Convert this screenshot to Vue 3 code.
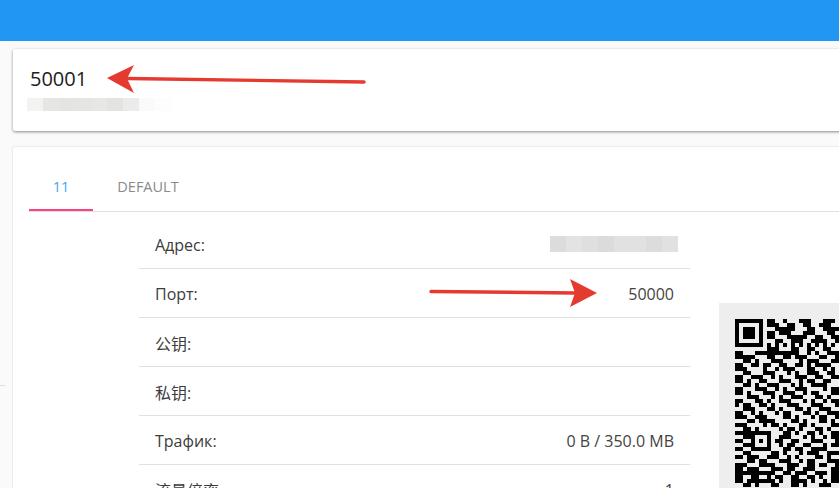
<script setup>
const rows = [
  { label: 'Адрес:', blur: true },
  { label: 'Порт:', value: '50000' },
  { label: '公钥:' },
  { label: '私钥:' },
  { label: 'Трафик:', value: '0 B / 350.0 MB' },
  { label: '流量倍率:', value: '1' }
]
const subtitleCells = ['#f3f3f2', '#e6e6e5', '#e4e4e3', '#e5e5e4', '#e7e7e6', '#e3e3e2', '#ebebea', '#fafafa', '#fdfdfd']
const valueCells = ['#dcdcdc', '#e3e3e3', '#dfdfdf', '#dbdbdb', '#e1e1e1', '#e1e1e1', '#dcdcdc', '#e1e1e1']
const qr = [
  '11111110110010001110001110',
  '10000010111001100110011100',
  '10111010001111100011001111',
  '10111010110111000111000110',
  '10111010110001111100110011',
  '10000010001100111001111001',
  '11111110101010101010101010',
  '00000000111000110011001100',
  '11000111111111110010100111',
  '11111000110011011100011001',
  '00110100011100001011100011',
  '11001101100110011010111100',
  '11100001001011100011001010',
  '00110001110001010011100110',
  '11001110010100011100110011',
  '11010011000111001011001100',
  '00110100111000101001111000',
  '11000111001010011100001011',
  '11010001110011100101100011',
  '00011100010100111000110100',
  '11000110100111000101001011',
  '10110011010001110001110001',
  '00111000110100011010011100',
  '11001010001011000110100111',
  '11100111000011010001011001',
  '00011011110000110100011010',
  '11100001011010001101000011',
  '00110100000101101000110100',
  '11111111100011010011010011',
  '00111000100111000101001011',
  '11001010101100110001110001',
  '00111000100101100110001011',
  '11001111100011011001111000',
  '00110000011010001011100111',
  '11011100111001010000110100',
  '00011011000111001011000111',
  '11100011110001110011011001',
  '11011100011101100111000011',
  '11111111110011011100111011',
  '11001100101100110011010011',
  '11011111110100111101001011',
  '00110100011000110100011100'
]
const qrPath = qr
  .map((line, y) =>
    [...line].map((c, x) => (c === '1' ? `M${x} ${y}h1v1h-1z` : '')).join('')
  )
  .join('')
</script>

<template>
  <div class="page">
    <header class="bar"></header>
    <main class="content">
      <section class="card head">
        <h1 class="title">50001</h1>
        <div class="sub">
          <span v-for="(c, i) in subtitleCells" :key="i" class="cell" :style="{ background: c }"></span>
        </div>
      </section>
      <section class="card detail">
        <nav class="tabs">
          <a class="tab active">11</a>
          <a class="tab">DEFAULT</a>
        </nav>
        <div class="body">
          <div class="list">
            <div v-for="r in rows" :key="r.label" class="row">
              <span>{{ r.label }}</span>
              <span v-if="r.blur" class="blur">
                <span v-for="(c, i) in valueCells" :key="i" class="vcell" :style="{ background: c }"></span>
              </span>
              <span v-else class="val">{{ r.value }}</span>
            </div>
          </div>
          <div class="qrbox">
            <svg class="qr" width="104" height="168" viewBox="0 0 26 42" shape-rendering="crispEdges">
              <path :d="qrPath" fill="#000" />
            </svg>
          </div>
        </div>
      </section>
    </main>
    <i class="tick"></i>
    <svg class="arrows" width="839" height="488" viewBox="0 0 839 488">
      <path d="M364 82 L128 78.5" stroke="#e53a30" stroke-width="3.4" stroke-linecap="round" fill="none" />
      <path d="M107 78 L134 65 L127 78.5 L134 93 Z" fill="#e53a30" />
      <path d="M431 291.5 L575 293" stroke="#e53a30" stroke-width="3.4" stroke-linecap="round" fill="none" />
      <path d="M597 293 L570 279 L575 293 L570 307 Z" fill="#e53a30" />
    </svg>
  </div>
</template>

<style>
html, body { margin: 0; background: #fafafa; overflow: hidden; }
</style>

<style scoped>
.page {
  position: relative;
  width: 839px;
  height: 488px;
  overflow: hidden;
  background: #fafafa;
  font-family: "Open Sans", "Noto Sans CJK SC", sans-serif;
  color: #3c3c3c;
}
.bar { height: 41px; background: #2196f3; }
.content { padding: 8px 0 0 13px; width: 900px; box-sizing: border-box; }
.card {
  background: #fff;
  border-radius: 2px;
}
.head {
  height: 82px;
  box-sizing: border-box;
  padding: 16px 17px;
  margin-bottom: 16px;
  box-shadow: 0 1px 3px rgba(0, 0, 0, .45);
}
.title {
  margin: 0;
  font-size: 20px;
  font-weight: 400;
  line-height: 27px;
  color: #212121;
}
.sub { display: flex; margin: 6px 0 0 -3px; height: 13px; }
.cell { width: 16px; height: 13px; }
.detail {
  padding: 16px;
  box-shadow: 0 0 2px rgba(0, 0, 0, .2);
}
.tabs { display: flex; height: 48px; border-bottom: 1px solid #e0e0e0; }
.tab {
  box-sizing: border-box;
  height: 48px;
  width: 64px;
  padding-bottom: 2px;
  display: flex;
  align-items: center;
  justify-content: center;
  font-size: 14.5px;
  color: #8a8a8a;
}
.tab + .tab { width: 110px; }
.tab.active { color: #42a5f5; border-bottom: 2px solid #ff4081; padding-bottom: 0; }
.body { display: flex; align-items: flex-start; margin-top: 8px; padding-left: 110px; }
.list { width: 551px; flex: none; }
.row {
  box-sizing: border-box;
  height: 49px;
  padding: 2px 16px 0;
  display: flex;
  align-items: center;
  justify-content: space-between;
  font-size: 16px;
  border-bottom: 1px solid #e0e0e0;
}
.val { font-size: 16px; color: #444; }
.blur { display: flex; margin: -2px -4px 0 0; }
.vcell { width: 16px; height: 16px; }
.qrbox {
  margin: 83px 0 0 29px;
  padding: 16px;
  background: #eee;
  flex: none;
  width: 200px;
  height: 200px;
}
.qr { display: block; }
.tick { position: absolute; left: 0; top: 385px; width: 5px; height: 1px; background: #ddd; }
.arrows { position: absolute; left: 0; top: 0; pointer-events: none; }
</style>
